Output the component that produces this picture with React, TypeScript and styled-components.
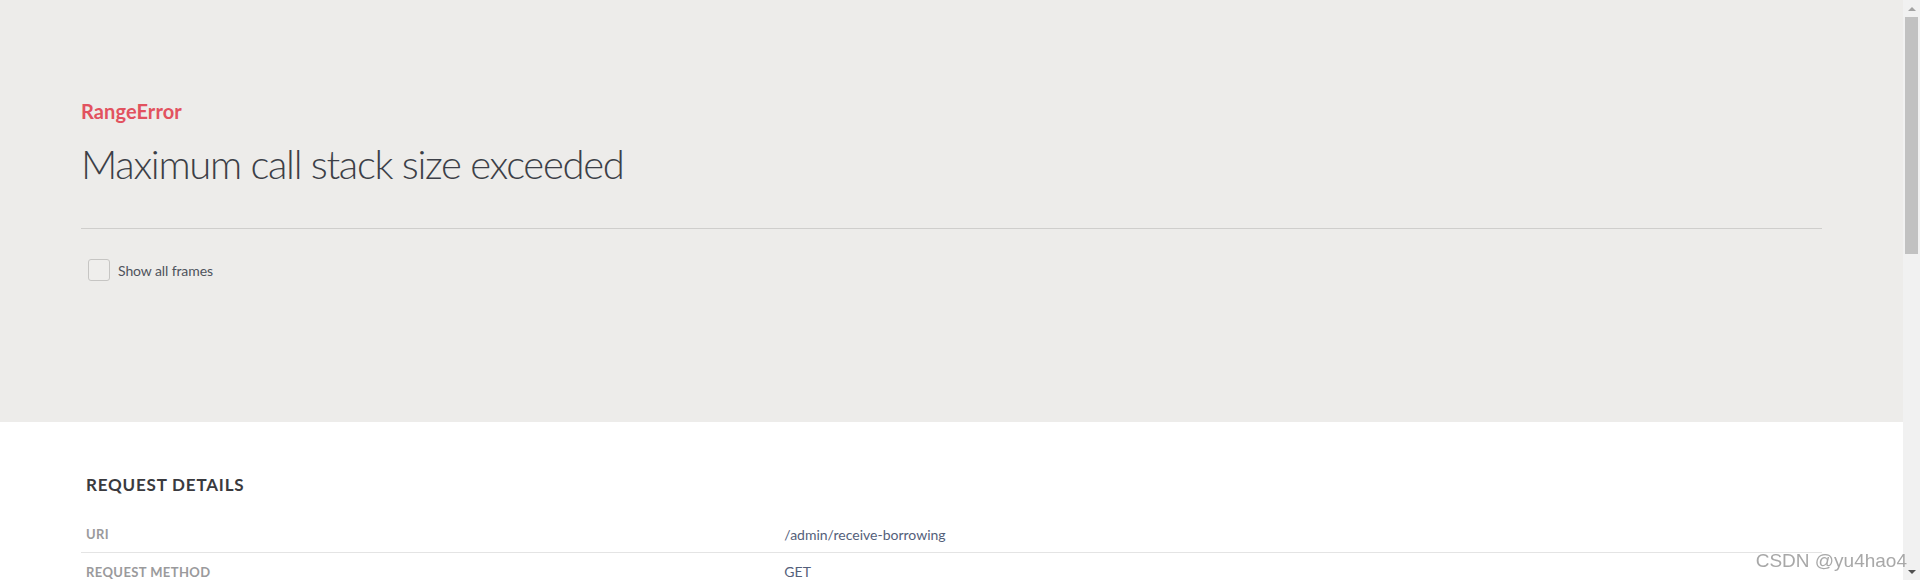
import styled, { createGlobalStyle } from 'styled-components'

const GlobalStyle = createGlobalStyle`
  html, body {
    margin: 0;
    padding: 0;
    background: #ffffff;
  }
  body {
    font-family: Lato, "Noto Sans", sans-serif;
    -webkit-font-smoothing: antialiased;
  }
`

const Frame = styled.div`
  display: flex;
  height: 580px;
  overflow: hidden;
`

const Viewport = styled.main`
  flex: 1;
  min-width: 0;
  background: #ffffff;
`

const Header = styled.section`
  background: #edecea;
  height: 422px;
  box-sizing: border-box;
  padding: 98px 81px 0;
`

const ErrorClass = styled.div`
  color: #e2525f;
  font-size: 20px;
  font-weight: 700;
  line-height: 26px;
  letter-spacing: 0.1px;
`

const Message = styled.h1`
  margin: 14px 0 0;
  color: #3c3f47;
  font-size: 40px;
  font-weight: 300;
  line-height: 52px;
  letter-spacing: -1.3px;
`

const Divider = styled.hr`
  margin: 38px 0 0;
  border: 0;
  border-top: 1px solid #cfcecc;
`

const Toggle = styled.label`
  display: flex;
  align-items: center;
  gap: 8px;
  margin: 30px 0 0 7px;
  color: #4f535c;
  font-size: 14px;
  letter-spacing: -0.1px;
  cursor: pointer;
`

const Checkbox = styled.span`
  display: block;
  width: 20px;
  height: 20px;
  border: 1px solid #c6c5c3;
  border-radius: 3px;
  background: #efeeec;
`

const Details = styled.section`
  padding: 51px 81px 0;
`

const SectionTitle = styled.h2`
  margin: 0 0 0 5px;
  color: #3a3a3e;
  font-size: 17px;
  font-weight: 700;
  letter-spacing: 0.8px;
  line-height: 24px;
`

const Table = styled.div`
  margin-top: 19px;
`

const Row = styled.div<{ $last?: boolean }>`
  display: grid;
  grid-template-columns: 40.4% 1fr;
  height: 37px;
  align-items: center;
  box-sizing: border-box;
  border-bottom: ${p => (p.$last ? '0' : '1px solid #e4e4e4')};
`

const Label = styled.div`
  padding-left: 5px;
  color: #9a9a9c;
  font-size: 13px;
  font-weight: 700;
  letter-spacing: 0.4px;
  text-transform: uppercase;
`

const Value = styled.div`
  color: #54607a;
  font-size: 14px;
`

const ScrollTrack = styled.aside`
  width: 17px;
  flex: none;
  display: flex;
  flex-direction: column;
  background: #f1f1f1;
`

const ScrollButton = styled.div`
  height: 17px;
  flex: none;
  display: flex;
  align-items: center;
  justify-content: center;
`

const Arrow = styled.span<{ $down?: boolean }>`
  width: 0;
  height: 0;
  border-left: 4px solid transparent;
  border-right: 4px solid transparent;
  ${p =>
    p.$down
      ? 'border-top: 4px solid #505050;'
      : 'border-bottom: 4px solid #a3a3a3;'}
`

const Thumb = styled.div`
  height: 237px;
  flex: none;
  margin: 0 2px;
  background: #c1c1c1;
`

const TrackRest = styled.div`
  flex: 1;
`

const Watermark = styled.div`
  position: fixed;
  right: 13px;
  bottom: 8px;
  color: #a8a8a8;
  font-family: "Liberation Sans", Arial, sans-serif;
  font-size: 19px;
  text-shadow: 0 0 1px #ffffff, 0 0 1px #ffffff;
`

const rows = [
  { label: 'URI', value: '/admin/receive-borrowing' },
  { label: 'Request Method', value: 'GET' },
]

export default function App() {
  return (
    <>
      <GlobalStyle />
      <Frame>
        <Viewport>
          <Header>
            <ErrorClass>RangeError</ErrorClass>
            <Message>Maximum call stack size exceeded</Message>
            <Divider />
            <Toggle>
              <Checkbox />
              Show all frames
            </Toggle>
          </Header>
          <Details>
            <SectionTitle>REQUEST DETAILS</SectionTitle>
            <Table>
              {rows.map((row, i) => (
                <Row key={row.label} $last={i === rows.length - 1}>
                  <Label>{row.label}</Label>
                  <Value>{row.value}</Value>
                </Row>
              ))}
            </Table>
          </Details>
        </Viewport>
        <ScrollTrack>
          <ScrollButton>
            <Arrow />
          </ScrollButton>
          <Thumb />
          <TrackRest />
          <ScrollButton>
            <Arrow $down />
          </ScrollButton>
        </ScrollTrack>
      </Frame>
      <Watermark>CSDN @yu4hao4</Watermark>
    </>
  )
}
